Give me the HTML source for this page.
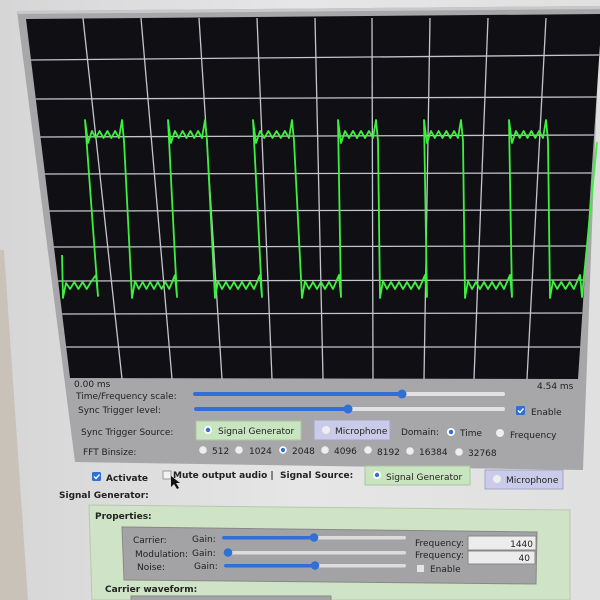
<!DOCTYPE html>
<html><head><meta charset="utf-8"><style>
html,body{margin:0;padding:0;width:600px;height:600px;overflow:hidden;background:#e2e2e2}
svg{display:block}
text{font-family:"DejaVu Sans","Liberation Sans",sans-serif;font-size:9px;fill:#222}
.b{font-weight:bold}
</style></head><body>
<svg width="600" height="600" viewBox="0 0 600 600">
<defs>
<linearGradient id="pg" x1="0" y1="0" x2="1" y2="0">
<stop offset="0" stop-color="#d6d6d6"/><stop offset="0.5" stop-color="#e6e6e6"/><stop offset="1" stop-color="#e0e0e0"/>
</linearGradient>
</defs>
<rect width="600" height="600" fill="url(#pg)"/>
<!-- bezel left -->
<polygon points="0,250 4,250 28,600 0,600" fill="#c9c2b8"/>
<!-- grey panel -->
<polygon points="17,11 600,6 600,12 583,470 75,462" fill="#a7a7a9"/>
<polygon points="17,11 600,6 600,9 18,14" fill="#c8c8cc"/>
<!-- scope dark -->
<polygon points="26,19 602,14 578,379 70,378" fill="#101014"/>
<g id="grid" stroke="#c4c4cc" stroke-width="1.3" fill="none"></g>
<path id="wave" stroke="#3ef03e" stroke-width="1.8" fill="none" stroke-linejoin="round"/>
<!-- labels -->
<text x="74" y="387">0.00 ms</text>
<text x="537" y="389">4.54 ms</text>
<text x="76" y="399">Time/Frequency scale:</text>
<rect x="193" y="392" width="312" height="4" rx="2" fill="#e2e2e2"/>
<rect x="193" y="392" width="209" height="4" rx="2" fill="#2f6fd6"/>
<circle cx="402" cy="394" r="4.5" fill="#2f6fd6"/>
<text x="78" y="413">Sync Trigger level:</text>
<rect x="194" y="407" width="311" height="4" rx="2" fill="#e2e2e2"/>
<rect x="194" y="407" width="154" height="4" rx="2" fill="#2f6fd6"/>
<circle cx="348" cy="409" r="4.5" fill="#2f6fd6"/>
<rect x="516" y="406" width="9" height="9" rx="1.5" fill="#2f6fd6"/>
<path d="M518 410.5l2 2 3.5-4" stroke="#fff" stroke-width="1.4" fill="none"/>
<text x="531" y="415">Enable</text>
<text x="81" y="435">Sync Trigger Source:</text>
<rect x="196" y="421" width="105" height="19" fill="#c9e5c0" stroke="#a8c4a0"/>
<circle cx="208" cy="430" r="4" fill="#fff"/><circle cx="208" cy="430" r="2.2" fill="#2f6fd6"/>
<text x="218" y="434">Signal Generator</text>
<rect x="314" y="420" width="76" height="20" fill="#c9cbe8" stroke="#a4a6c8"/>
<circle cx="326" cy="430" r="4" fill="#eee"/>
<text x="335" y="434">Microphone</text>
<text x="401" y="435">Domain:</text>
<circle cx="451" cy="432" r="4" fill="#fff"/><circle cx="451" cy="432" r="2.2" fill="#2f6fd6"/>
<text x="460" y="436">Time</text>
<circle cx="500" cy="433" r="4" fill="#eee"/>
<text x="510" y="438">Frequency</text>
<text x="83" y="455">FFT Binsize:</text>
<g>
<circle cx="203" cy="450" r="3.8" fill="#eee"/><text x="212" y="454">512</text>
<circle cx="239" cy="450" r="3.8" fill="#eee"/><text x="249" y="454">1024</text>
<circle cx="283" cy="450" r="3.8" fill="#fff"/><circle cx="283" cy="450" r="2.1" fill="#2f6fd6"/><text x="292" y="454">2048</text>
<circle cx="325" cy="450" r="3.8" fill="#eee"/><text x="334" y="454">4096</text>
<circle cx="368" cy="450" r="3.8" fill="#eee"/><text x="377" y="455">8192</text>
<circle cx="410" cy="451" r="3.8" fill="#eee"/><text x="419" y="455">16384</text>
<circle cx="459" cy="452" r="3.8" fill="#eee"/><text x="468" y="456">32768</text>
</g>
<!-- below -->
<rect x="92" y="472" width="9" height="9" rx="1.5" fill="#2f6fd6"/>
<path d="M94 476.5l2 2 3.5-4" stroke="#fff" stroke-width="1.4" fill="none"/>
<text x="106" y="481" class="b">Activate</text>
<rect x="163" y="471" width="8" height="8" fill="#f2f2f2" stroke="#999"/>
<path d="M171 476l0 11 3-3 3 5 2-1-3-5 4 0z" fill="#111"/>
<text x="173" y="478" class="b">Mute output audio |</text>
<text x="280" y="478" class="b">Signal Source:</text>
<rect x="365" y="466" width="105" height="19" fill="#c9e5c0" stroke="#a8c4a0"/>
<circle cx="377" cy="475" r="4" fill="#fff"/><circle cx="377" cy="475" r="2.2" fill="#2f6fd6"/>
<text x="386" y="480">Signal Generator</text>
<rect x="485" y="470" width="78" height="19" fill="#c9cbe8" stroke="#a4a6c8"/>
<circle cx="497" cy="479" r="4" fill="#eee"/>
<text x="506" y="483">Microphone</text>
<text x="59" y="498" class="b">Signal Generator:</text>
<polygon points="89,505 570,510 570,600 92,600" fill="#cfe4c6" stroke="#b5c9ad"/>
<text x="95" y="519" class="b">Properties:</text>
<polygon points="122,527 537,532 536,584 124,580" fill="#a3a3a5" stroke="#888"/>
<text x="133" y="543">Carrier:</text><text x="192" y="542">Gain:</text>
<rect x="222" y="536" width="184" height="3.5" rx="1.7" fill="#dcdcdc"/>
<rect x="222" y="536" width="92" height="3.5" rx="1.7" fill="#2f6fd6"/>
<circle cx="314" cy="537.5" r="4.3" fill="#2f6fd6"/>
<text x="415" y="546">Frequency:</text>
<rect x="468" y="536" width="68" height="14" fill="#ececec" stroke="#888"/>
<text x="533" y="547" text-anchor="end">1440</text>
<text x="135" y="557">Modulation:</text><text x="192" y="556">Gain:</text>
<rect x="224" y="551" width="182" height="3.5" rx="1.7" fill="#dcdcdc"/>
<circle cx="228" cy="552.5" r="4.3" fill="#2f6fd6"/>
<text x="415" y="558">Frequency:</text>
<rect x="468" y="551" width="67" height="13" fill="#ececec" stroke="#888"/>
<text x="530" y="561" text-anchor="end">40</text>
<text x="137" y="570">Noise:</text><text x="194" y="569">Gain:</text>
<rect x="224" y="564" width="182" height="3.5" rx="1.7" fill="#dcdcdc"/>
<rect x="224" y="564" width="91" height="3.5" rx="1.7" fill="#2f6fd6"/>
<circle cx="315" cy="565.5" r="4.3" fill="#2f6fd6"/>
<rect x="417" y="565" width="7" height="7" fill="#e4e4e4"/>
<text x="430" y="572">Enable</text>
<text x="105" y="592" class="b">Carrier waveform:</text>
<rect x="131" y="596" width="200" height="6" fill="#a3a3a5" stroke="#888"/>
</svg>
<script>
(function(){
var g=document.getElementById('grid'),s='';
var tops=[83,141,199,257,315,372,430,488,546],bots=[122,172,222,272,323,373,424,474,527];
for(var i=0;i<9;i++)s+='<line x1="'+tops[i]+'" y1="18" x2="'+bots[i]+'" y2="379"/>';
var hl=[[60,55],[99,97],[137,135],[174,173],[211,210],[247,246],[281,280],[314,313],[347,347]];
for(var i=0;i<hl.length;i++){var y=hl[i][0];var xl=26+(y-19)*44/359;var xr=602-(y-14)*24/365;s+='<line x1="'+xl+'" y1="'+y+'" x2="'+xr+'" y2="'+hl[i][1]+'"/>';}
g.innerHTML=s;
var hi=135,lo=285;
function zig(x1,x2,base,sign){var d='',n=Math.max(3,Math.round((x2-x1)/4));for(var k=1;k<n;k++){var x=x1+(x2-x1)*k/n;d+=' L'+x.toFixed(1)+','+(base+(k%2?-4:3)*sign);}return d;}
var r=[85,168,253,338,424,509],f=[122,205,292,376,461,546];
var d='M62,255 L63,298 L66,283'+zig(66,95,lo,-1)+' L96,275 L98,296';
for(var i=0;i<6;i++){
 d+=' L'+r[i]+','+(hi-15)+' L'+(r[i]+3)+','+(hi+8)+zig(r[i]+3,f[i]-3,hi,1)+' L'+(f[i]-3)+','+(hi+3)+' L'+f[i]+','+(hi-15)+' L'+(f[i]+2)+','+(hi+6);
 var fb=f[i]+(i<3?10:4);
 d+=' L'+fb+','+(lo+13)+' L'+(fb+3)+','+(lo-4)+zig(fb+3,(i<5?r[i+1]+(i+1<3?10:4):583)-5,lo,-1);
 var nb=(i<5?r[i+1]+(i+1<3?10:4):583);
 d+=' L'+(nb-3)+','+(lo-10)+' L'+(nb-1)+','+(lo+12);
}
d+=' L597,142';
document.getElementById('wave').setAttribute('d',d);
})();
</script>
</body></html>
